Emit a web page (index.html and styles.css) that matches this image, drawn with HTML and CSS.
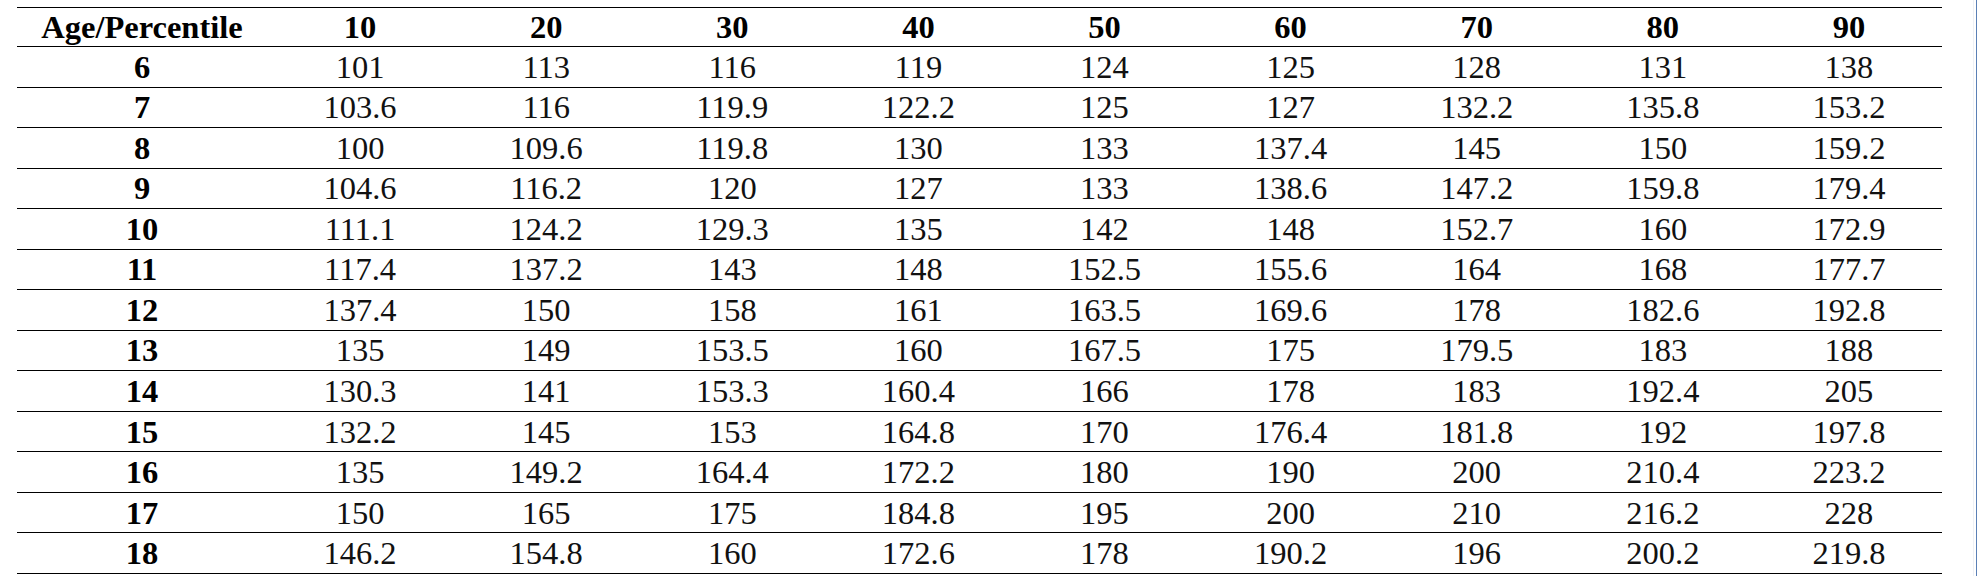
FILE: index.html
```html
<!DOCTYPE html>
<html>
<head>
<meta charset="utf-8">
<link rel="stylesheet" href="styles.css">
</head>
<body>
<div class="page">
  <div class="wrap">
    <table class="pct">
      <colgroup>
        <col class="c-age">
        <col><col><col><col><col><col><col><col><col>
      </colgroup>
      <thead>
        <tr><th>Age/Percentile</th><th>10</th><th>20</th><th>30</th><th>40</th><th>50</th><th>60</th><th>70</th><th>80</th><th>90</th></tr>
      </thead>
      <tbody>
        <tr><th>6</th><td>101</td><td>113</td><td>116</td><td>119</td><td>124</td><td>125</td><td>128</td><td>131</td><td>138</td></tr>
        <tr><th>7</th><td>103.6</td><td>116</td><td>119.9</td><td>122.2</td><td>125</td><td>127</td><td>132.2</td><td>135.8</td><td>153.2</td></tr>
        <tr><th>8</th><td>100</td><td>109.6</td><td>119.8</td><td>130</td><td>133</td><td>137.4</td><td>145</td><td>150</td><td>159.2</td></tr>
        <tr><th>9</th><td>104.6</td><td>116.2</td><td>120</td><td>127</td><td>133</td><td>138.6</td><td>147.2</td><td>159.8</td><td>179.4</td></tr>
        <tr><th>10</th><td>111.1</td><td>124.2</td><td>129.3</td><td>135</td><td>142</td><td>148</td><td>152.7</td><td>160</td><td>172.9</td></tr>
        <tr><th>11</th><td>117.4</td><td>137.2</td><td>143</td><td>148</td><td>152.5</td><td>155.6</td><td>164</td><td>168</td><td>177.7</td></tr>
        <tr><th>12</th><td>137.4</td><td>150</td><td>158</td><td>161</td><td>163.5</td><td>169.6</td><td>178</td><td>182.6</td><td>192.8</td></tr>
        <tr><th>13</th><td>135</td><td>149</td><td>153.5</td><td>160</td><td>167.5</td><td>175</td><td>179.5</td><td>183</td><td>188</td></tr>
        <tr><th>14</th><td>130.3</td><td>141</td><td>153.3</td><td>160.4</td><td>166</td><td>178</td><td>183</td><td>192.4</td><td>205</td></tr>
        <tr><th>15</th><td>132.2</td><td>145</td><td>153</td><td>164.8</td><td>170</td><td>176.4</td><td>181.8</td><td>192</td><td>197.8</td></tr>
        <tr><th>16</th><td>135</td><td>149.2</td><td>164.4</td><td>172.2</td><td>180</td><td>190</td><td>200</td><td>210.4</td><td>223.2</td></tr>
        <tr><th>17</th><td>150</td><td>165</td><td>175</td><td>184.8</td><td>195</td><td>200</td><td>210</td><td>216.2</td><td>228</td></tr>
        <tr><th>18</th><td>146.2</td><td>154.8</td><td>160</td><td>172.6</td><td>178</td><td>190.2</td><td>196</td><td>200.2</td><td>219.8</td></tr>
      </tbody>
    </table>
  </div>
  <div class="edge"></div>
</div>
</body>
</html>
```
FILE: styles.css
```css
html, body {
  margin: 0;
  padding: 0;
  background: #ffffff;
}

.page {
  display: flex;
  justify-content: space-between;
  align-items: stretch;
  width: 1977px;
  height: 576px;
  overflow: hidden;
}

.wrap {
  padding: 7px 0 0 17px;
}

.pct {
  width: 1925px;
  height: 567px;
  table-layout: fixed;
  border-collapse: collapse;
  font-family: "Liberation Serif", "Times New Roman", Times, serif;
  font-size: 32.5px;
  color: #000;
}

.c-age {
  width: 250px;
}

.pct th,
.pct td {
  padding: 0;
  line-height: 38px;
  text-align: center;
  vertical-align: middle;
  border-bottom: 1.6px solid #000;
  white-space: nowrap;
  font-family: "Liberation Serif", "Times New Roman", Times, serif;
}

.pct thead th {
  border-top: 1.6px solid #000;
  font-weight: bold;
}

.pct tbody th {
  font-weight: bold;
}

.pct td {
  font-weight: 400;
  color: #111;
}

.edge {
  width: 1px;
  background: #5b80b6;
  box-shadow: -3px 0 0 #eef1f6;
}
```
